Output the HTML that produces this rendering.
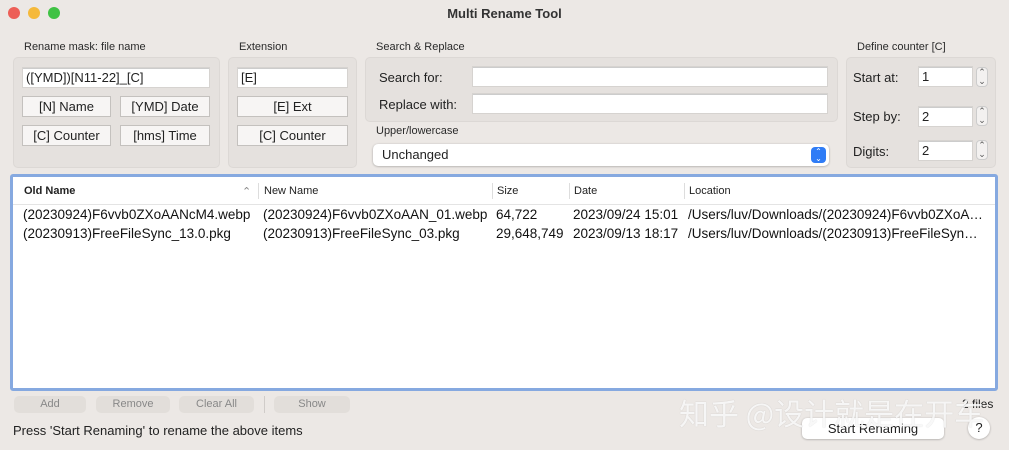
<!DOCTYPE html>
<html><head><meta charset="utf-8"><style>
*{box-sizing:border-box;margin:0;padding:0}
body{width:1009px;height:450px;background:#ece8e5;font-family:"Liberation Sans",sans-serif;color:#222;position:relative;overflow:hidden;font-size:13px}
.a{position:absolute}
.lbl{position:absolute;font-size:11px;color:#2a2a2a}
.grp{position:absolute;background:#e5e1de;border:1px solid #dcd8d5;border-radius:5px}
.inp{position:absolute;background:#fff;border:1px solid #d6d3d0;box-shadow:inset 0 1px 0 #ccc;font-size:13px;padding:2px 3px;line-height:15px}
.btn{position:absolute;background:#f7f5f4;border:1px solid #c4c1be;font-size:13px;text-align:center;line-height:19px;color:#222}
.dot{position:absolute;width:12px;height:12px;border-radius:50%;top:7px}
.st{position:absolute;width:12px;height:20px;font-size:9px;color:#555;line-height:9px;text-align:center;background:#f3f1f0;border-radius:4px;border:1px solid #ccc}
.th{position:absolute;top:185px;font-size:11px;color:#222}
.td{position:absolute;font-size:13.5px;color:#111;white-space:nowrap}
.bb{position:absolute;top:396px;height:17px;background:#e2deda;border-radius:5px;font-size:11px;color:#888;text-align:center;line-height:17px}
</style></head><body>
<div class="dot" style="left:8px;background:#ed5f57"></div>
<div class="dot" style="left:28px;background:#f5b93a"></div>
<div class="dot" style="left:48px;background:#3fc244"></div>
<div class="a" style="left:0;width:1009px;top:6px;text-align:center;font-weight:bold;font-size:13px;color:#333">Multi Rename Tool</div>

<div class="lbl" style="left:24px;top:41px">Rename mask: file name</div>
<div class="grp" style="left:13px;top:57px;width:207px;height:111px"></div>
<div class="inp" style="left:22px;top:67px;width:188px;height:21px">([YMD])[N11-22]_[C]</div>
<div class="btn" style="left:22px;top:96px;width:89px;height:21px">[N] Name</div>
<div class="btn" style="left:120px;top:96px;width:90px;height:21px">[YMD] Date</div>
<div class="btn" style="left:22px;top:125px;width:89px;height:21px">[C] Counter</div>
<div class="btn" style="left:120px;top:125px;width:90px;height:21px">[hms] Time</div>

<div class="lbl" style="left:239px;top:41px">Extension</div>
<div class="grp" style="left:228px;top:57px;width:129px;height:111px"></div>
<div class="inp" style="left:237px;top:67px;width:111px;height:21px">[E]</div>
<div class="btn" style="left:237px;top:96px;width:111px;height:21px">[E] Ext</div>
<div class="btn" style="left:237px;top:125px;width:111px;height:21px">[C] Counter</div>

<div class="lbl" style="left:376px;top:41px">Search &amp; Replace</div>
<div class="grp" style="left:365px;top:57px;width:473px;height:65px"></div>
<div class="a" style="left:379px;top:70px">Search for:</div>
<div class="inp" style="left:472px;top:66px;width:356px;height:21px"></div>
<div class="a" style="left:379px;top:97px">Replace with:</div>
<div class="inp" style="left:472px;top:93px;width:356px;height:21px"></div>
<div class="lbl" style="left:376px;top:125px">Upper/lowercase</div>
<div class="a" style="left:373px;top:144px;width:456px;height:22px;background:#fff;border-radius:5px;box-shadow:0 0.5px 2px rgba(0,0,0,.3);padding:3px 9px">Unchanged</div>
<div class="a" style="left:811px;top:147px;width:15px;height:16px;background:#2f7cf6;border-radius:4px;color:#fff;font-size:8px;line-height:7px;text-align:center;padding-top:1px">⌃<br>⌄</div>

<div class="lbl" style="left:857px;top:41px">Define counter [C]</div>
<div class="grp" style="left:846px;top:57px;width:150px;height:111px"></div>
<div class="a" style="left:853px;top:70px">Start at:</div>
<div class="inp" style="left:918px;top:66px;width:55px;height:21px">1</div>
<div class="st" style="left:976px;top:67px">⌃<br>⌄</div>
<div class="a" style="left:853px;top:109px">Step by:</div>
<div class="inp" style="left:918px;top:106px;width:55px;height:21px">2</div>
<div class="st" style="left:976px;top:106px">⌃<br>⌄</div>
<div class="a" style="left:853px;top:144px">Digits:</div>
<div class="inp" style="left:918px;top:140px;width:55px;height:21px">2</div>
<div class="st" style="left:976px;top:140px">⌃<br>⌄</div>

<div class="a" style="left:10px;top:174px;width:988px;height:217px;border:3px solid #86a9e0;border-radius:3px;background:#fff"></div>
<div class="a" style="left:13px;top:204px;width:982px;height:1px;background:#e4e4e4"></div>
<div class="th" style="left:24px;font-weight:bold">Old Name</div>
<div class="th" style="left:242px;color:#888">⌃</div>
<div class="a" style="left:258px;top:183px;width:1px;height:16px;background:#ddd"></div>
<div class="th" style="left:264px">New Name</div>
<div class="a" style="left:492px;top:183px;width:1px;height:16px;background:#ddd"></div>
<div class="th" style="left:497px">Size</div>
<div class="a" style="left:569px;top:183px;width:1px;height:16px;background:#ddd"></div>
<div class="th" style="left:574px">Date</div>
<div class="a" style="left:684px;top:183px;width:1px;height:16px;background:#ddd"></div>
<div class="th" style="left:689px">Location</div>
<div class="td" style="left:23px;top:207px">(20230924)F6vvb0ZXoAANcM4.webp</div>
<div class="td" style="left:263px;top:207px;width:226px;overflow:hidden">(20230924)F6vvb0ZXoAAN_01.webp</div>
<div class="td" style="left:496px;top:207px">64,722</div>
<div class="td" style="left:573px;top:207px;width:110px;overflow:hidden">2023/09/24 15:01</div>
<div class="td" style="left:688px;top:207px;width:296px;overflow:hidden;text-overflow:ellipsis">/Users/luv/Downloads/(20230924)F6vvb0ZXoAANcM4.webp</div>
<div class="td" style="left:23px;top:226px">(20230913)FreeFileSync_13.0.pkg</div>
<div class="td" style="left:263px;top:226px">(20230913)FreeFileSync_03.pkg</div>
<div class="td" style="left:496px;top:226px;width:72px;overflow:hidden">29,648,749</div>
<div class="td" style="left:573px;top:226px;width:110px;overflow:hidden">2023/09/13 18:17</div>
<div class="td" style="left:688px;top:226px;width:296px;overflow:hidden;text-overflow:ellipsis">/Users/luv/Downloads/(20230913)FreeFileSync_13.0.pkg</div>

<div class="bb" style="left:14px;width:72px">Add</div>
<div class="bb" style="left:96px;width:74px">Remove</div>
<div class="bb" style="left:179px;width:75px">Clear All</div>
<div class="a" style="left:264px;top:396px;width:1px;height:17px;background:#d0ccc9"></div>
<div class="bb" style="left:274px;width:76px">Show</div>
<div class="a" style="left:962px;top:397px;font-size:12px">2 files</div>
<div class="a" style="left:13px;top:423px">Press 'Start Renaming' to rename the above items</div>
<div class="a" style="left:802px;top:418px;width:142px;height:21px;background:#fff;border-radius:5px;box-shadow:0 0.5px 2px rgba(0,0,0,.3);text-align:center;line-height:21px">Start Renaming</div>
<div class="a" style="left:968px;top:417px;width:22px;height:22px;border-radius:50%;background:#fff;box-shadow:0 0.5px 2px rgba(0,0,0,.3);text-align:center;line-height:22px">?</div>
<div class="a" style="left:679px;top:390px;font-family:'Noto Sans CJK SC',sans-serif;font-size:30px;color:rgba(255,255,255,.85);white-space:nowrap;text-shadow:0 0 1px rgba(0,0,0,.2)">知乎 @设计就是在开车</div>
</body></html>
